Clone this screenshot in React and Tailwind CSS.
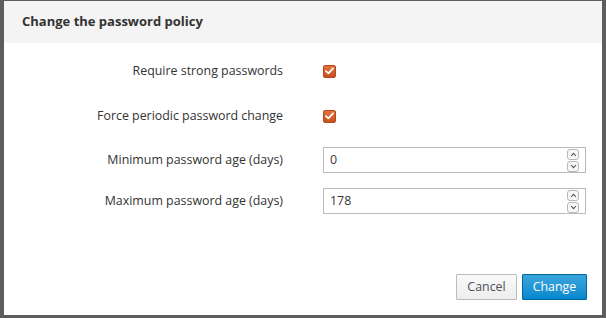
import React from "react";

function Check() {
  return (
    <div className="w-[13px] h-[13px] rounded-[2px] border border-[#b54a1e] bg-gradient-to-b from-[#e2703c] to-[#c9511f] flex items-center justify-center">
      <svg width="9" height="8" viewBox="0 0 9 8">
        <path d="M1 4.2 L3.4 6.4 L8 1.4" fill="none" stroke="#fff" strokeWidth="1.8" strokeLinecap="round" strokeLinejoin="round" />
      </svg>
    </div>
  );
}

function Spinner() {
  return (
    <div className="flex flex-col gap-[1px] absolute right-[6px] top-[1px]">
      {[0, 1].map((i) => (
        <div key={i} className="w-[12px] h-[11px] rounded-[3px] border border-[#b8b8b8] bg-[#f7f7f7] flex items-center justify-center">
          <svg width="7" height="5" viewBox="0 0 7 5">
            <path d={i === 0 ? "M1 4 L3.5 1.3 L6 4" : "M1 1 L3.5 3.7 L6 1"} fill="none" stroke="#555" strokeWidth="1.1" />
          </svg>
        </div>
      ))}
    </div>
  );
}

function NumInput({ value }) {
  return (
    <div className="relative w-[263px] h-[26px] border border-[#bbbbbb] bg-white flex items-center pl-[6px] text-[12.4px] text-[#363636]">
      {value}
      <Spinner />
    </div>
  );
}

function Row({ label, children, className }) {
  return (
    <div className={"flex items-center h-[26px] " + className}>
      <div className="w-[279px] text-right text-[12.4px] text-[#333333] whitespace-nowrap">{label}</div>
      <div className="ml-[40px]">{children}</div>
    </div>
  );
}

export default function App() {
  return (
    <div
      className="w-[606px] h-[318px] bg-[#5d5d5d] pl-[4px] pt-[1px] overflow-hidden"
      style={{ fontFamily: '"Open Sans", "Noto Sans", sans-serif' }}
    >
      <div className="w-[598px] h-[314px] bg-white flex flex-col">
        <div className="h-[42px] bg-[#f4f4f4] flex items-center pl-[18px]">
          <span className="text-[13px] font-bold text-[#333333]">Change the password policy</span>
        </div>
        <div className="flex flex-col pt-[15px]">
          <Row label="Require strong passwords"><Check /></Row>
          <Row label="Force periodic password change" className="mt-[19px]"><Check /></Row>
          <Row label="Minimum password age (days)" className="mt-[18px]"><NumInput value="0" /></Row>
          <Row label="Maximum password age (days)" className="mt-[15px]"><NumInput value="178" /></Row>
        </div>
        <div className="mt-auto mb-[15px] flex justify-end gap-[5px] pr-[15px]">
          <button className="w-[61px] h-[26px] border border-[#bbbbbb] bg-gradient-to-b from-[#fafafa] to-[#ededed] text-[12.4px] text-[#4d5258] rounded-[1px]">
            Cancel
          </button>
          <button className="w-[65px] h-[26px] border border-[#00659c] bg-gradient-to-b from-[#39a5dc] to-[#0088ce] text-[12.4px] text-white rounded-[1px]">
            Change
          </button>
        </div>
      </div>
    </div>
  );
}
